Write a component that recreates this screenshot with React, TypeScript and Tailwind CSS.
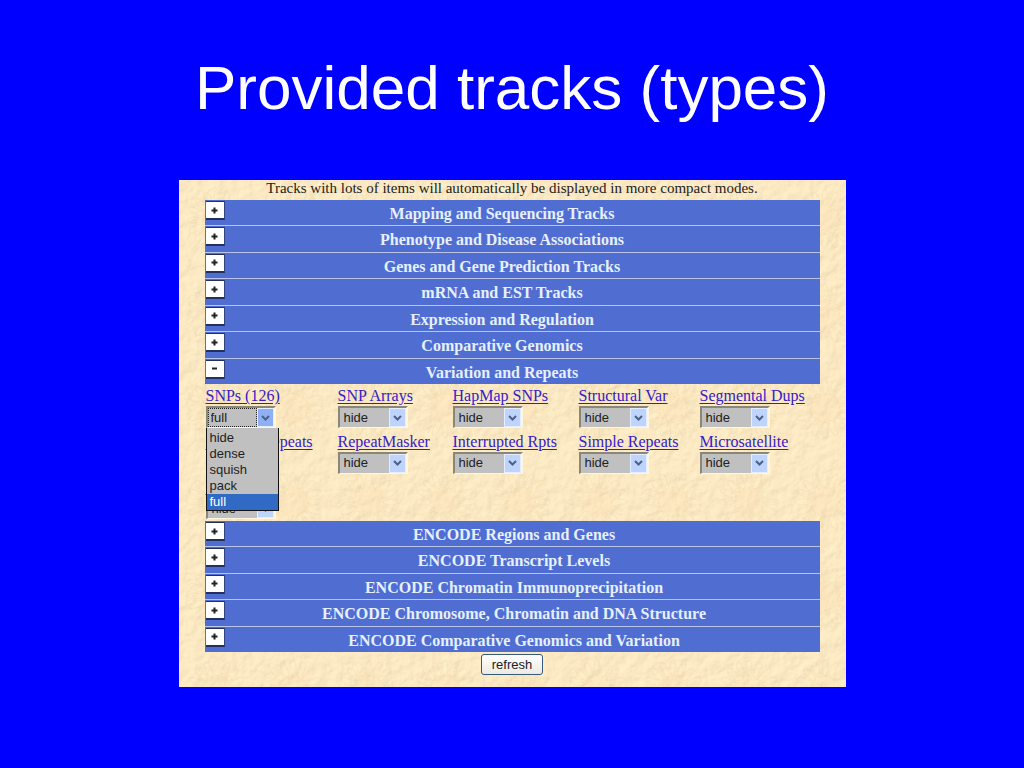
import { useState } from "react";
import clsx from "clsx";

const MODES = ["hide", "dense", "squish", "pack", "full"];

const GENOME_GROUPS = [
  "Mapping and Sequencing Tracks",
  "Phenotype and Disease Associations",
  "Genes and Gene Prediction Tracks",
  "mRNA and EST Tracks",
  "Expression and Regulation",
  "Comparative Genomics",
  "Variation and Repeats",
];

const ENCODE_GROUPS = [
  "ENCODE Regions and Genes",
  "ENCODE Transcript Levels",
  "ENCODE Chromatin Immunoprecipitation",
  "ENCODE Chromosome, Chromatin and DNA Structure",
  "ENCODE Comparative Genomics and Variation",
];

const TRACKS = [
  "SNPs (126)",
  "SNP Arrays",
  "HapMap SNPs",
  "Structural Var",
  "Segmental Dups",
  "Exapted Repeats",
  "RepeatMasker",
  "Interrupted Rpts",
  "Simple Repeats",
  "Microsatellite",
  "Self Chain",
];

const PETALS = Array.from({ length: 16 }, (_, i) => i * 22.5);

// Embossed parchment with faint sunflowers
function Parchment() {
  return (
    <svg className="absolute inset-0 h-full w-full" aria-hidden="true">
      <defs>
        <filter id="grain" x="0" y="0" width="100%" height="100%">
          <feTurbulence type="fractalNoise" baseFrequency="0.09" numOctaves="3" seed="4" />
          <feColorMatrix values="0 0 0 0 0  0 0 0 0 0  0 0 0 0 0  1 0 0 0 0" />
          <feDiffuseLighting surfaceScale="1" diffuseConstant="1.35" lightingColor="#ffedc8">
            <feDistantLight azimuth="225" elevation="46" />
          </feDiffuseLighting>
        </filter>
        <pattern id="flowers" width="76" height="94" patternUnits="userSpaceOnUse">
          <g transform="translate(38 40)">
            <circle r="15" fill="#f8b888" fillOpacity="0.09" />
            {PETALS.map((angle) => (
              <ellipse
                key={angle}
                cx="0"
                cy="-22"
                rx="3"
                ry="8"
                fill="none"
                stroke="#d9b16c"
                strokeOpacity="0.13"
                transform={`rotate(${angle})`}
              />
            ))}
          </g>
        </pattern>
      </defs>
      <rect width="100%" height="100%" filter="url(#grain)" opacity="0.4" />
      <rect width="100%" height="100%" fill="url(#flowers)" />
    </svg>
  );
}

interface GroupBarProps {
  title: string;
  open?: boolean;
  className?: string;
}

function GroupBar({ title, open, className }: GroupBarProps) {
  return (
    <div className="flex items-start bg-[#506ed2]">
      <button
        aria-label={`${open ? "Collapse" : "Expand"} ${title}`}
        className="ml-px mt-px flex h-[19px] w-[19px] shrink-0 items-center justify-center border-b-2 border-r border-t border-b-[#24305c] border-r-[#33437c] border-t-[#24305c] bg-white"
      >
        <svg viewBox="0 0 7 7" className="h-[7px] w-[7px]" stroke="#222" strokeWidth="2">
          <path d={open ? "M1 3.5h5" : "M.5 3.5h6M3.5 .5v6"} />
        </svg>
      </button>
      <h2
        className={clsx(
          "flex-1 pt-1 text-center text-[16px] leading-5 font-bold whitespace-nowrap text-[#e6f0ff]",
          className
        )}
      >
        {title}
      </h2>
    </div>
  );
}

interface TrackSelectProps {
  name: string;
  value: string;
  open: boolean;
  onChange: (value: string) => void;
  onToggle: () => void;
}

function TrackSelect({ name, value, open, onChange, onToggle }: TrackSelectProps) {
  return (
    <div className="min-w-0">
      <a
        href="#"
        id={name}
        className="block pt-[2px] pb-px text-[16px] leading-[19px] whitespace-nowrap text-[#3420c8] underline underline-offset-2"
      >
        {name}
      </a>
      <div className="relative w-[70px] font-['Liberation_Sans',Arial,sans-serif] text-[13px]">
        <div className="relative flex h-[22px] border-t-2 border-r-2 border-b border-l-2 border-t-[#8b8776] border-r-[#fff6df] border-b-[#fff6df] border-l-[#8b8776] bg-[#c0c0c0]">
          <select
            aria-labelledby={name}
            value={value}
            onChange={(e) => onChange(e.target.value)}
            onMouseDown={(e) => {
              e.preventDefault();
              onToggle();
            }}
            className={clsx(
              "w-[49px] appearance-none border border-dotted leading-4 text-[#222] outline-none",
              open ? "border-[#222] pl-[2px]" : "border-transparent pl-[3px]"
            )}
          >
            {MODES.map((mode) => (
              <option key={mode}>{mode}</option>
            ))}
          </select>
          <span
            className={clsx(
              "pointer-events-none flex w-[17px] items-center justify-center border border-[#e5eeff]",
              open ? "bg-[#8fb0f5]" : "bg-[#bfd4fc]"
            )}
          >
            <svg viewBox="0 0 9 6" className="h-[6px] w-[9px]" fill="none" stroke="#4d6185" strokeWidth="2">
              <path d="M1 1l3.5 3.5L8 1" />
            </svg>
          </span>
        </div>
        {open && (
          <ul
            role="listbox"
            aria-labelledby={name}
            className="absolute top-full left-0 z-10 w-[73px] border border-t-0 border-[#111] bg-[#c0c0c0] pt-[2px]"
          >
            {MODES.map((mode) => (
              <li
                key={mode}
                role="option"
                aria-selected={mode === value}
                onClick={() => onChange(mode)}
                className={clsx(
                  "h-4 pl-[3px] leading-4",
                  mode === value ? "bg-[#316ac5] text-white" : "text-[#222]"
                )}
              >
                {mode}
              </li>
            ))}
          </ul>
        )}
      </div>
    </div>
  );
}

export default function App() {
  const [modes, setModes] = useState<Record<string, string>>({ "SNPs (126)": "full" });
  const [openTrack, setOpenTrack] = useState<string | null>("SNPs (126)");

  const handleChange = (name: string, value: string) => {
    setModes({ ...modes, [name]: value });
    setOpenTrack(null);
  };

  return (
    <main className="flex min-h-screen flex-col items-center bg-[#0000ff] pt-[50px] pb-20">
      <h1 className="font-['Liberation_Sans',Arial,sans-serif] text-[62px] leading-[76px] whitespace-nowrap text-white">
        Provided tracks (types)
      </h1>

      <section className="relative mt-[54px] w-[65%] min-w-[667px] bg-[#fce9c2] px-[26px] pb-3 font-['Liberation_Serif','Times_New_Roman',serif]">
        <Parchment />
        <div className="relative">
          <p className="h-5 text-center text-[15px] leading-4 whitespace-nowrap text-[#222]">
            Tracks with lots of items will automatically be displayed in more compact modes.
          </p>

          <div className="grid h-[184px] auto-rows-fr gap-px bg-[#b9c4e6]">
            {GENOME_GROUPS.map((title) => (
              <GroupBar
                key={title}
                title={title}
                open={title === "Variation and Repeats"}
                className="pr-10"
              />
            ))}
          </div>

          <div className="grid h-[137px] auto-rows-fr grid-cols-[132fr_115fr_126fr_121fr_120fr] pl-px">
            {TRACKS.map((name) => (
              <TrackSelect
                key={name}
                name={name}
                value={modes[name] ?? "hide"}
                open={openTrack === name}
                onChange={(value) => handleChange(name, value)}
                onToggle={() => setOpenTrack(openTrack === name ? null : name)}
              />
            ))}
          </div>

          <div className="grid h-[131px] auto-rows-fr gap-px bg-[#b9c4e6]">
            {ENCODE_GROUPS.map((title) => (
              <GroupBar key={title} title={title} className="pr-4" />
            ))}
          </div>

          <div className="flex justify-center pt-[2px]">
            <button className="h-[21px] w-[62px] rounded-[3px] border border-[#355a7c] bg-linear-to-b from-white to-[#ebeae2] font-['Liberation_Sans',Arial,sans-serif] text-[13px] leading-4 text-[#222]">
              refresh
            </button>
          </div>
        </div>
      </section>
    </main>
  );
}
